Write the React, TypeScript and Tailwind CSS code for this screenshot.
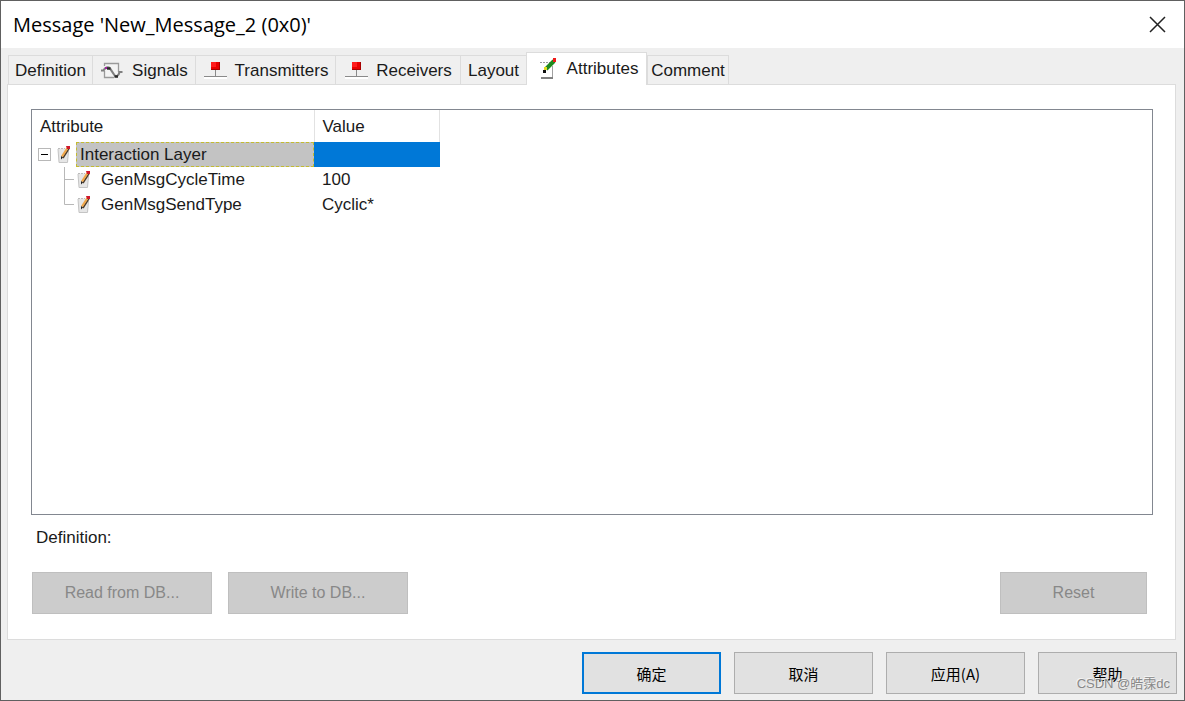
import type { ReactNode } from "react";
import clsx from "clsx";

function SignalIcon() {
  return (
    <svg width="24" height="20" viewBox="0 0 24 20" fill="none" aria-hidden="true">
      <path d="M4.500 2.500h14v13.500h-14z" fill="#f4f4f4" />
      <path d="M4.500 5V2.500h14V11M4.500 10v6.500H14" stroke="#9a9a9a" strokeWidth="1.300" />
      <path d="M1 9.500h2.500C5 6.500 8 5.500 10 7.500l4 6c2 3 4.500 2 5.500-2.500h3" stroke="#808080" strokeWidth="2.200" />
      <path d="M7 7.500h3.500M14.500 15.500H18" stroke="#2a2a2a" strokeWidth="2.500" />
      <path d="M5 7h2" stroke="#a020a0" strokeWidth="2" />
    </svg>
  );
}

function NodeIcon() {
  return (
    <svg width="24" height="20" viewBox="0 0 24 20" fill="none" aria-hidden="true">
      <path d="M1 17h23" stroke="#ffffff" strokeWidth="2" />
      <path d="M1 15.500h23M12.500 9v6" stroke="#8a8a8a" />
      <path d="M8 1h9v8H8z" fill="#a80000" />
      <path d="M8 1h8v7H8z" fill="#e80000" />
      <path d="M8 1h5v5H8z" fill="#ff1c1c" />
    </svg>
  );
}

function AttributeTabIcon() {
  return (
    <svg width="20" height="24" viewBox="0 0 20 24" fill="none" aria-hidden="true">
      <path d="M1 5.500h11" stroke="#9a9a9a" strokeDasharray="2 1" />
      <path d="M13.500 9v11" stroke="#a0a0a0" />
      <path d="M2 21h12" stroke="#808080" strokeWidth="2" />
      <path d="M7 12l8-8" stroke="#1f8a1f" strokeWidth="4" />
      <path d="M14 1h3v4h-3z" fill="#f01818" />
      <path d="M5 10h3v3H5z" fill="#e0dc20" />
      <path d="M4 13h3v3H4z" fill="#101010" />
    </svg>
  );
}

function AttributeIcon() {
  return (
    <svg width="14" height="19" viewBox="0 0 14 19" fill="none" aria-hidden="true">
      <path d="M1 3.500h10V17H2z" fill="#e6e6e6" />
      <path d="M1 3.500h7" stroke="#bcbcbc" strokeDasharray="2 1" />
      <path d="M11.500 6l-1 11.500H2L1 4" stroke="#c4c4c4" />
      <path d="M6 13l6-9.500" stroke="#4a3a2a" strokeWidth="1.500" />
      <path d="M5 11.500L10.500 3" stroke="#f0a648" strokeWidth="2.200" />
      <path d="M9 1h4v3h-3z" fill="#d0182c" />
      <path d="M4 11l2 1.500L4 14.500z" fill="#202020" />
    </svg>
  );
}

const tabs: { label: string; width: string; icon?: ReactNode }[] = [
  { label: "Definition", width: "w-[84px]" },
  { label: "Signals", width: "w-[103px]", icon: <SignalIcon /> },
  { label: "Transmitters", width: "w-[140px]", icon: <NodeIcon /> },
  { label: "Receivers", width: "w-[125px]", icon: <NodeIcon /> },
  { label: "Layout", width: "w-[66px]" },
  { label: "Attributes", width: "w-[121px]", icon: <AttributeTabIcon /> },
  { label: "Comment", width: "w-[82px]" },
];

const attributes = [
  { name: "GenMsgCycleTime", value: "100" },
  { name: "GenMsgSendType", value: "Cyclic*" },
];

const disabledButton =
  "h-[42px] border border-[#bfbfbf] bg-[#cccccc] text-[16px] text-[#888888]";
const dialogButton =
  "h-[42px] w-[139px] bg-[#e1e1e1] pt-px text-[15px] text-black font-['Noto_Sans_CJK_SC',sans-serif]";

export default function App() {
  return (
    <main className="relative flex min-h-screen flex-col border border-[#606060] bg-[#efefef] font-['Liberation_Sans',Arial,sans-serif] text-[17px] leading-5 text-[#1a1a1a]">
      <header className="flex h-[47px] items-center justify-between bg-white pl-3 pr-[18px]">
        <h1 className="font-['Open_Sans','Noto_Sans',sans-serif] text-[20px] text-black">
          Message &apos;New_Message_2 (0x0)&apos;
        </h1>
        <button type="button" aria-label="Close">
          <svg width="17" height="17" viewBox="0 0 17 17" fill="none">
            <path d="M1 1l15 15M16 1L1 16" stroke="#222222" strokeWidth="1.500" />
          </svg>
        </button>
      </header>

      <div role="tablist" className="flex h-9 items-end pl-[7px]">
        {tabs.map((tab) => {
          const selected = tab.label === "Attributes";
          return (
            <button
              key={tab.label}
              type="button"
              role="tab"
              aria-selected={selected}
              className={clsx(
                "flex shrink-0 items-center justify-center whitespace-nowrap border-l border-t border-[#dcdcdc]",
                tab.icon && "gap-2",
                tab.label === "Comment" && "border-r",
                selected ? "z-10 -mb-px h-[33px] border-r bg-white pl-1" : "h-[29px] bg-[#f0f0f0] pt-0.5",
                tab.width,
              )}
            >
              {tab.icon}
              {tab.label}
            </button>
          );
        })}
      </div>

      <section
        role="tabpanel"
        className="ml-[6px] mr-2 flex flex-1 flex-col border border-[#dcdcdc] bg-white px-6 pb-[25px] pt-6"
      >
        <div className="-ml-px mr-[-2px] min-h-[180px] flex-1 border border-[#828790]">
          <table className="w-[408px] table-fixed border-collapse text-left">
            <thead>
              <tr className="h-8">
                <th className="w-[282px] border-r border-[#e2e2e2] pl-2 pt-0.5 font-normal">
                  Attribute
                </th>
                <th className="border-r border-[#e2e2e2] pl-2 pt-0.5 font-normal">Value</th>
              </tr>
            </thead>
            <tbody>
              <tr className="h-[25px]">
                <td className="p-0">
                  <div className="flex h-[25px] items-center pl-1.5">
                    <button
                      type="button"
                      aria-label="Collapse Interaction Layer"
                      className="flex size-[13px] items-center justify-center border border-[#b8b8b8] bg-white"
                    >
                      <span className="h-px w-[7px] bg-black" />
                    </button>
                    <span className="ml-1.5 mr-[5px]">
                      <AttributeIcon />
                    </span>
                    <span className="flex h-full flex-1 items-center border border-dashed border-[#c4bc30] bg-[#c3c3c3] pl-[3px]">
                      Interaction Layer
                    </span>
                  </div>
                </td>
                <td className="bg-[#0078d7] p-0" />
              </tr>
              {attributes.map((attribute, index) => (
                <tr key={attribute.name} className="h-[25px]">
                  <td className="p-0">
                    <div className="flex h-[25px] items-center pl-8">
                      <svg width="10" height="25" viewBox="0 0 10 25" fill="none" aria-hidden="true">
                        <path
                          d={index === attributes.length - 1 ? "M.5 0v12.500H10" : "M.5 0v25M.5 12.500H10"}
                          stroke="#b8b8b8"
                        />
                      </svg>
                      <span className="ml-[3px] mr-2.5">
                        <AttributeIcon />
                      </span>
                      {attribute.name}
                    </div>
                  </td>
                  <td className="py-0 pl-2">{attribute.value}</td>
                </tr>
              ))}
            </tbody>
          </table>
        </div>

        <p className="mt-[13px] pl-1 text-[17px]">Definition:</p>

        <div className="mt-6 flex gap-4">
          <button type="button" disabled className={clsx(disabledButton, "w-[180px]")}>
            Read from DB...
          </button>
          <button type="button" disabled className={clsx(disabledButton, "w-[180px]")}>
            Write to DB...
          </button>
          <button type="button" disabled className={clsx(disabledButton, "ml-auto mr-1 w-[147px]")}>
            Reset
          </button>
        </div>
      </section>

      <footer className="flex justify-end gap-[13px] pb-[6px] pr-[7px] pt-3">
        <button type="button" className={clsx(dialogButton, "border-2 border-[#0078d7]")}>
          确定
        </button>
        <button type="button" className={clsx(dialogButton, "border border-[#adadad]")}>
          取消
        </button>
        <button type="button" className={clsx(dialogButton, "border border-[#adadad]")}>
          应用(A)
        </button>
        <button type="button" className={clsx(dialogButton, "border border-[#adadad]")}>
          帮助
        </button>
      </footer>

      <span className="pointer-events-none absolute bottom-1.5 right-3.5 font-['Liberation_Sans','Noto_Sans_CJK_SC',sans-serif] text-[13px] text-[#888888] [text-shadow:-1px_-1px_0_#f4f4f4]">
        CSDN @皓霂dc
      </span>
    </main>
  );
}
